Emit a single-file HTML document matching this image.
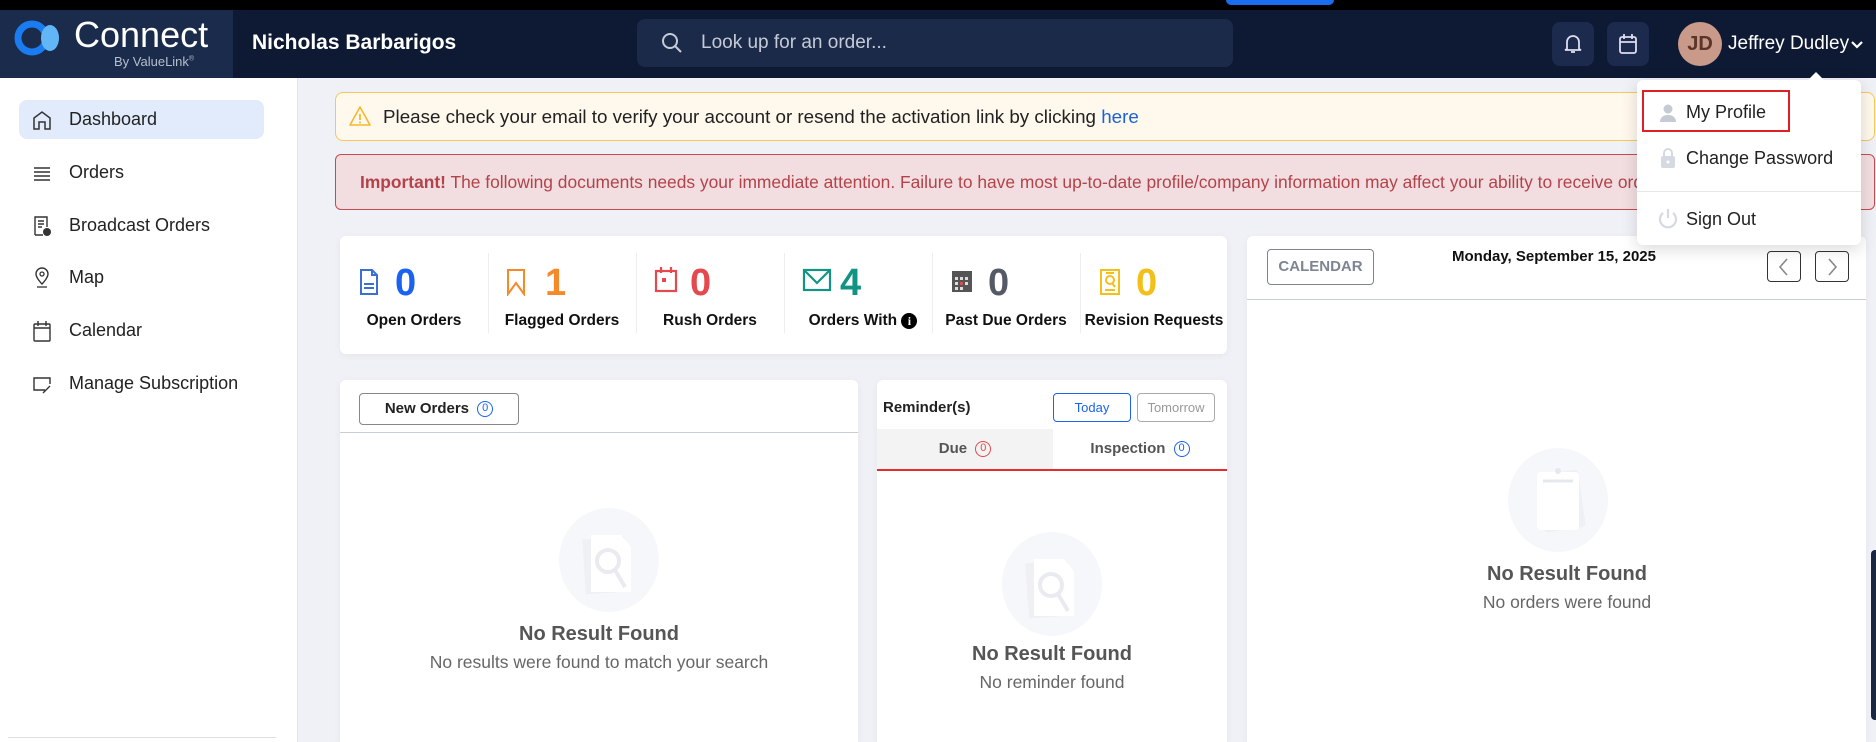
<!DOCTYPE html>
<html style="overflow:hidden;width:1876px;height:742px"><head><meta charset="utf-8"><style>
*{box-sizing:border-box;margin:0;padding:0}
body{width:1876px;height:742px;overflow:hidden;background:#f0f1f6;font-family:"Liberation Sans",Arial,sans-serif;position:relative;color:#222}
.a{position:absolute}
.nav{position:absolute;left:19px;width:245px;height:39px;display:flex;align-items:center;font-size:18px;color:#222}
.nav svg{position:absolute;left:12px}
.nav span{position:absolute;left:50px}
.card{position:absolute;background:#fff;border-radius:6px;box-shadow:0 2px 8px rgba(0,0,0,.05)}
.lbl{position:absolute;top:312px;width:148px;text-align:center;font-size:15.5px;font-weight:bold;color:#111}
.num{position:absolute;top:262px;font-size:38px;font-weight:bold}
.empty{position:absolute;text-align:center}
.empty b{display:block;font-size:20px;color:#555}
.empty i{display:block;font-style:normal;font-size:17.5px;color:#666;margin-top:6px}
.badge{display:inline-block;width:16px;height:16px;border:1.5px solid;border-radius:50%;font-size:11px;line-height:13px;text-align:center;vertical-align:middle;margin-left:4px;font-weight:normal}
</style></head><body>
<div class="a" style="left:0;top:0;width:1876px;height:10px;background:#000"></div>
<div class="a" style="left:1226px;top:0;width:108px;height:5px;background:#1a6cf0;border-radius:0 0 6px 6px"></div>
<div class="a" style="left:0;top:10px;width:1876px;height:68px;background:#0e1a33"></div>
<div class="a" style="left:0;top:10px;width:233px;height:68px;background:#1b2b4b"></div>
<svg class="a" style="left:14px;top:18px" width="48" height="40" viewBox="0 0 48 40"><circle cx="18" cy="20" r="14" fill="none" stroke="#1a7cf0" stroke-width="7"/><ellipse cx="36" cy="20" rx="9" ry="13" fill="#62b6f5"/></svg>
<div class="a" style="left:74px;top:14px;font-size:36px;color:#fff">Connect</div>
<div class="a" style="left:114px;top:54px;font-size:13px;color:#b6bfcc">By ValueLink<sup style="font-size:7px">®</sup></div>
<div class="a" style="left:252px;top:31px;font-size:21px;font-weight:bold;color:#fff">Nicholas Barbarigos</div>
<div class="a" style="left:637px;top:19px;width:596px;height:48px;background:#1c2a4a;border-radius:8px"></div>
<svg class="a" style="left:661px;top:32px" width="22" height="22" viewBox="0 0 22 22"><circle cx="9" cy="9" r="7" fill="none" stroke="#c4cad6" stroke-width="2"/><path d="M14 14l6 6" stroke="#c4cad6" stroke-width="2"/></svg>
<div class="a" style="left:701px;top:32px;font-size:19px;color:#c4cad6">Look up for an order...</div>
<div class="a" style="left:1552px;top:22px;width:42px;height:44px;background:#1c2b4d;border-radius:8px"></div>
<svg class="a" style="left:1563px;top:33px" width="20" height="22" viewBox="0 0 20 22"><path d="M4 16V9a6 6 0 0 1 12 0v7l2 1H2z" fill="none" stroke="#dde" stroke-width="1.8"/><path d="M8 19h4" stroke="#dde" stroke-width="1.8"/></svg>
<div class="a" style="left:1607px;top:22px;width:42px;height:44px;background:#1c2b4d;border-radius:8px"></div>
<svg class="a" style="left:1618px;top:33px" width="20" height="22" viewBox="0 0 20 22"><rect x="2" y="4" width="16" height="16" rx="2" fill="none" stroke="#dde" stroke-width="1.8"/><path d="M2 9h16M6 1v5M14 1v5" stroke="#dde" stroke-width="1.8"/></svg>
<div class="a" style="left:1678px;top:22px;width:44px;height:44px;border-radius:50%;background:#c9998a;color:#5a3528;font-weight:bold;font-size:20px;text-align:center;line-height:44px">JD</div>
<div class="a" style="left:1728px;top:33px;font-size:19px;color:#fff">Jeffrey Dudley</div>
<svg class="a" style="left:1850px;top:40px" width="14" height="10" viewBox="0 0 14 10"><path d="M2 2l5 5 5-5" fill="none" stroke="#fff" stroke-width="2.2"/></svg>
<div class="a" style="left:0;top:78px;width:298px;height:664px;background:#fff;border-right:1px solid #e3e5ea"></div>
<div class="a" style="left:8px;top:737px;width:268px;height:1px;background:#ddd"></div>
<div class="nav" style="top:100px;background:#e2ebfb;border-radius:8px"><svg width="22" height="22" viewBox="0 0 22 22"><path d="M3 20V9l8-6 8 6v11h-5v-7H8v7z" fill="none" stroke="#333" stroke-width="1.5"/></svg><span>Dashboard</span></div>
<div class="nav" style="top:153px"><svg width="22" height="22" viewBox="0 0 22 22"><path d="M3 6h16M3 10h16M3 14h16M3 18h16" stroke="#333" stroke-width="1.4"/></svg><span>Orders</span></div>
<div class="nav" style="top:206px"><svg width="22" height="22" viewBox="0 0 22 22"><path d="M4 20V2h12v10M7 6h6M7 9h6M7 12h4M4 20h8" fill="none" stroke="#333" stroke-width="1.4"/><circle cx="16" cy="17" r="4" fill="#333"/></svg><span>Broadcast Orders</span></div>
<div class="nav" style="top:258px"><svg width="22" height="22" viewBox="0 0 22 22"><path d="M11 17s-6-6-6-10a6 6 0 0 1 12 0c0 4-6 10-6 10z" fill="none" stroke="#333" stroke-width="1.4"/><circle cx="11" cy="7" r="2" fill="none" stroke="#333" stroke-width="1.3"/><path d="M6 20h10" stroke="#333" stroke-width="1.3"/></svg><span>Map</span></div>
<div class="nav" style="top:311px"><svg width="22" height="22" viewBox="0 0 22 22"><rect x="3" y="4" width="16" height="17" rx="1" fill="none" stroke="#333" stroke-width="1.4"/><path d="M3 8h16M7 1v5M15 1v5" stroke="#333" stroke-width="1.4"/></svg><span>Calendar</span></div>
<div class="nav" style="top:364px"><svg width="22" height="22" viewBox="0 0 22 22"><path d="M14 17H3V5h16v6M12 20l7-7" fill="none" stroke="#333" stroke-width="1.4"/></svg><span>Manage Subscription</span></div>
<div class="a" style="left:335px;top:92px;width:1540px;height:49px;background:#fff8ec;border:1.5px solid #f7c75a;border-radius:8px"></div>
<svg class="a" style="left:348px;top:105px" width="24" height="22" viewBox="0 0 24 22"><path d="M12 2L22 20H2z" fill="none" stroke="#f5b82e" stroke-width="1.6" stroke-linejoin="round"/><path d="M12 9v6" stroke="#f5b82e" stroke-width="1.8"/><circle cx="12" cy="17.5" r="1" fill="#f5b82e"/></svg>
<div class="a" style="left:383px;top:106px;font-size:18.8px;color:#222">Please check your email to verify your account or resend the activation link by clicking <span style="color:#1a62d6">here</span></div>
<div class="a" style="left:335px;top:154px;width:1540px;height:56px;background:#f2dee0;border:1.5px solid #c9494e;border-radius:6px"></div>
<div class="a" style="left:360px;top:172px;font-size:17.4px;color:#b2434a;white-space:nowrap"><b>Important!</b> The following documents needs your immediate attention. Failure to have most up-to-date profile/company information may affect your ability to receive orders.</div>
<div class="card" style="left:340px;top:236px;width:887px;height:118px"></div>
<div class="a" style="left:488px;top:253px;width:1px;height:80px;background:#eee"></div>
<div class="a" style="left:636px;top:253px;width:1px;height:80px;background:#eee"></div>
<div class="a" style="left:784px;top:253px;width:1px;height:80px;background:#eee"></div>
<div class="a" style="left:932px;top:253px;width:1px;height:80px;background:#eee"></div>
<div class="a" style="left:1080px;top:253px;width:1px;height:80px;background:#eee"></div>
<svg class="a" style="left:359px;top:268px" width="20" height="28" viewBox="0 0 20 28"><path d="M2 2h11l5 5v19H2z M13 2v5h5 M5 16h10M5 20h10" fill="none" stroke="#3b6fd1" stroke-width="2"/></svg>
<div class="num" style="left:395px;color:#1a62f0">0</div>
<div class="lbl" style="left:340px">Open Orders</div>
<svg class="a" style="left:506px;top:268px" width="20" height="28" viewBox="0 0 20 28"><path d="M2 2h16v24l-8-11-8 11z" fill="none" stroke="#f58a2a" stroke-width="2"/></svg>
<div class="num" style="left:545px;color:#f58a2a">1</div>
<div class="lbl" style="left:488px">Flagged Orders</div>
<svg class="a" style="left:654px;top:266px" width="24" height="28" viewBox="0 0 24 28"><rect x="2" y="5" width="20" height="20" fill="none" stroke="#e5484d" stroke-width="2.2"/><path d="M7 1v6M17 1v6" stroke="#e5484d" stroke-width="2.2"/><rect x="8" y="12" width="4" height="4" fill="#e5484d"/></svg>
<div class="num" style="left:690px;color:#e5484d">0</div>
<div class="lbl" style="left:636px">Rush Orders</div>
<svg class="a" style="left:802px;top:268px" width="30" height="24" viewBox="0 0 30 24"><rect x="2" y="2" width="26" height="20" fill="none" stroke="#119484" stroke-width="2.2"/><path d="M2 2l13 13L28 2" fill="none" stroke="#119484" stroke-width="2.2"/></svg>
<div class="num" style="left:840px;color:#119484">4</div>
<div class="lbl" style="left:784px;padding-left:10px">Orders With <span style="display:inline-block;width:16px;height:16px;border-radius:50%;background:#000;color:#fff;font-size:12px;line-height:16px;font-family:'Liberation Serif',serif">i</span></div>
<svg class="a" style="left:950px;top:268px" width="24" height="26" viewBox="0 0 24 26"><rect x="2" y="3" width="20" height="21" fill="#555"/><g fill="#ddd"><rect x="5" y="9" width="3" height="3"/><rect x="10" y="9" width="3" height="3"/><rect x="15" y="9" width="3" height="3"/><rect x="5" y="14" width="3" height="3"/><rect x="15" y="14" width="3" height="3"/><rect x="5" y="19" width="3" height="3"/><rect x="10" y="19" width="3" height="3"/></g><rect x="10" y="14" width="3" height="3" fill="#e5484d"/></svg>
<div class="num" style="left:988px;color:#555b66">0</div>
<div class="lbl" style="left:932px">Past Due Orders</div>
<svg class="a" style="left:1099px;top:268px" width="22" height="28" viewBox="0 0 22 28"><rect x="2" y="2" width="18" height="24" fill="none" stroke="#f2c019" stroke-width="2"/><circle cx="11" cy="12" r="4" fill="none" stroke="#f2c019" stroke-width="2"/><path d="M13 15l3 4M6 22h10M7 5h8" stroke="#f2c019" stroke-width="2"/></svg>
<div class="num" style="left:1136px;color:#f2c019">0</div>
<div class="lbl" style="left:1080px">Revision Requests</div>
<div class="card" style="left:340px;top:380px;width:518px;height:362px;border-radius:6px 6px 0 0"></div>
<div class="a" style="left:359px;top:393px;width:160px;height:32px;border:1px solid #888;border-radius:4px;text-align:center;line-height:30px;font-size:15px;font-weight:bold">New Orders <span class="badge" style="color:#1a62f0">0</span></div>
<div class="a" style="left:340px;top:432px;width:518px;height:1px;background:#c8ced8"></div>
<svg class="a" style="left:558px;top:508px" width="102" height="104" viewBox="0 0 102 104"><ellipse cx="51" cy="52" rx="50" ry="52" fill="#f6f7fa"/><rect x="26" y="30" width="42" height="55" fill="#eef0f4" transform="rotate(-4 47 57)"/><path d="M33 27h30l10 12v45H33z" fill="#fff"/><circle cx="50" cy="53" r="11" fill="none" stroke="#e9ebf0" stroke-width="4"/><path d="M57 62l10 17" stroke="#e9ebf0" stroke-width="4"/></svg>
<div class="empty" style="left:340px;top:623px;width:518px"><b>No Result Found</b><i>No results were found to match your search</i></div>
<div class="card" style="left:877px;top:380px;width:350px;height:362px;border-radius:6px 6px 0 0"></div>
<div class="a" style="left:883px;top:399px;font-size:15px;font-weight:bold">Reminder(s)</div>
<div class="a" style="left:1053px;top:393px;width:78px;height:29px;border:1px solid #1a62f0;border-radius:4px;color:#1a62f0;font-size:13px;text-align:center;line-height:27px">Today</div>
<div class="a" style="left:1137px;top:393px;width:78px;height:29px;border:1px solid #aaa;border-radius:4px;color:#999;font-size:13px;text-align:center;line-height:27px">Tomorrow</div>
<div class="a" style="left:877px;top:429px;width:176px;height:40px;background:#f3f3f3;text-align:center;line-height:40px;font-size:15px;font-weight:bold;color:#555">Due <span class="badge" style="color:#e5484d">0</span></div>
<div class="a" style="left:1053px;top:429px;width:174px;height:40px;text-align:center;line-height:40px;font-size:15px;font-weight:bold;color:#555">Inspection <span class="badge" style="color:#1a62f0">0</span></div>
<div class="a" style="left:877px;top:469px;width:350px;height:2px;background:#e52b2b"></div>
<svg class="a" style="left:1001px;top:532px" width="102" height="104" viewBox="0 0 102 104"><ellipse cx="51" cy="52" rx="50" ry="52" fill="#f6f7fa"/><rect x="26" y="30" width="42" height="55" fill="#eef0f4" transform="rotate(-4 47 57)"/><path d="M33 27h30l10 12v45H33z" fill="#fff"/><circle cx="50" cy="53" r="11" fill="none" stroke="#e9ebf0" stroke-width="4"/><path d="M57 62l10 17" stroke="#e9ebf0" stroke-width="4"/></svg>
<div class="empty" style="left:877px;top:643px;width:350px"><b>No Result Found</b><i>No reminder found</i></div>
<div class="card" style="left:1247px;top:236px;width:619px;height:506px;border-radius:6px 6px 0 0"></div>
<div class="a" style="left:1267px;top:249px;width:107px;height:36px;border:1.5px solid #7d8593;border-radius:4px;color:#7d8593;font-size:15px;font-weight:bold;text-align:center;line-height:33px">CALENDAR</div>
<div class="a" style="left:1452px;top:248px;font-size:15px;font-weight:bold;color:#111">Monday, September 15, 2025</div>
<div class="a" style="left:1767px;top:251px;width:34px;height:31px;border:1.5px solid #333;border-radius:4px"></div>
<svg class="a" style="left:1777px;top:257px" width="14" height="20" viewBox="0 0 14 20"><path d="M10 2L3 10l7 8" fill="none" stroke="#888" stroke-width="1.6"/></svg>
<div class="a" style="left:1815px;top:251px;width:34px;height:31px;border:1.5px solid #333;border-radius:4px"></div>
<svg class="a" style="left:1825px;top:257px" width="14" height="20" viewBox="0 0 14 20"><path d="M4 2l7 8-7 8" fill="none" stroke="#888" stroke-width="1.6"/></svg>
<div class="a" style="left:1247px;top:299px;width:619px;height:1px;background:#c8ced8"></div>
<svg class="a" style="left:1507px;top:448px" width="102" height="104" viewBox="0 0 102 104"><ellipse cx="51" cy="52" rx="50" ry="52" fill="#f6f7fa"/><rect x="33" y="24" width="42" height="58" rx="4" fill="#eef0f4" transform="rotate(-8 54 53)"/><rect x="30" y="24" width="42" height="58" rx="4" fill="#fff"/><path d="M36 33h30" stroke="#e6e8ef" stroke-width="3"/><circle cx="51" cy="23" r="3" fill="#e6e8ef"/></svg>
<div class="empty" style="left:1247px;top:563px;width:640px"><b>No Result Found</b><i>No orders were found</i></div>
<div class="a" style="left:1871px;top:550px;width:5px;height:170px;background:#1b2640;border-radius:4px 0 0 4px"></div>
<div class="a" style="left:1637px;top:80px;width:224px;height:165px;background:#fff;border-radius:6px;box-shadow:0 4px 16px rgba(0,0,0,.15)"></div>
<div class="a" style="left:1808px;top:72px;width:0;height:0;border-left:8px solid transparent;border-right:8px solid transparent;border-bottom:8px solid #fff"></div>
<div class="a" style="left:1642px;top:90px;width:148px;height:42px;border:2px solid #e01f25"></div>
<svg class="a" style="left:1658px;top:103px" width="20" height="20" viewBox="0 0 20 20"><circle cx="10" cy="6" r="4.5" fill="#c5cad3"/><path d="M2 19c0-5 4-7 8-7s8 2 8 7z" fill="#c5cad3"/></svg>
<div class="a" style="left:1686px;top:102px;font-size:18px;color:#222">My Profile</div>
<svg class="a" style="left:1659px;top:147px" width="18" height="22" viewBox="0 0 18 22"><rect x="2" y="9" width="14" height="12" rx="2" fill="#d5d9e1"/><path d="M5 9V6a4 4 0 0 1 8 0v3" fill="none" stroke="#d5d9e1" stroke-width="2"/><circle cx="9" cy="15" r="1.5" fill="#fff"/></svg>
<div class="a" style="left:1686px;top:148px;font-size:18px;color:#222">Change Password</div>
<div class="a" style="left:1637px;top:191px;width:224px;height:1px;background:#e6e6e6"></div>
<svg class="a" style="left:1656px;top:207px" width="24" height="24" viewBox="0 0 24 24"><path d="M7 6a8 8 0 1 0 10 0" fill="none" stroke="#d5d9e1" stroke-width="2.2"/><path d="M12 2v9" stroke="#d5d9e1" stroke-width="2.2"/></svg>
<div class="a" style="left:1686px;top:209px;font-size:18px;color:#222">Sign Out</div>
</body></html>
